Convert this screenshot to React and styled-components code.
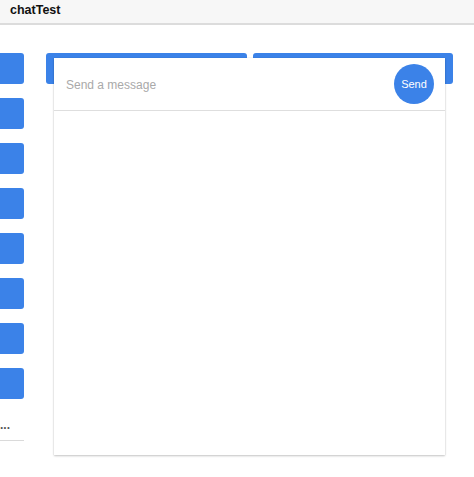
import React from "react";
import styled, { createGlobalStyle } from "styled-components";

const Global = createGlobalStyle`
  html, body { margin: 0; padding: 0; background: #fff; }
  html { overflow: hidden; }
  body { font-family: "Liberation Sans", Arial, sans-serif; min-height: 477px; }
  * { box-sizing: border-box; }
`;

const BLUE = "#3b82e8";

const Header = styled.header`
  height: 25px;
  background: #f7f7f7;
  border-bottom: 2px solid #dcdcdc;
  padding: 3px 0 0 10px;
  font-size: 12.5px;
  font-weight: bold;
  color: #111;
  line-height: 14px;
`;

const Layout = styled.div`
  display: flex;
  padding-top: 28px;
`;

const Sidebar = styled.nav`
  width: 24px;
  display: flex;
  flex-direction: column;
  gap: 14px;
`;

const SideButton = styled.button`
  display: block;
  width: 24px;
  height: 31px;
  border: none;
  padding: 0;
  background: ${BLUE};
  border-radius: 0 3px 3px 0;
`;

const More = styled.div`
  margin-top: 5px;
  font-size: 12px;
  font-weight: bold;
  color: #555;
  line-height: 14px;
  padding-bottom: 8px;
  border-bottom: 1px solid #dadada;
  white-space: nowrap;
  overflow: hidden;
`;

const MainCol = styled.main`
  margin-left: 22px;
  width: 407px;
  display: flex;
  flex-direction: column;
`;

const Tabs = styled.div`
  display: flex;
  gap: 6px;
`;

const Tab = styled.button`
  flex: 1;
  height: 31px;
  border: none;
  background: ${BLUE};
  border-radius: 3px;
`;

const Card = styled.section`
  position: relative;
  z-index: 1;
  margin: -26px 0 0 8px;
  width: 391px;
  height: 397px;
  background: #fff;
  box-shadow: 0 1px 2px rgba(0, 0, 0, 0.22), 0 0 1px rgba(0, 0, 0, 0.12);
  display: flex;
  flex-direction: column;
`;

const InputRow = styled.div`
  height: 53px;
  display: flex;
  align-items: center;
  padding: 0 11px 0 12px;
  border-bottom: 1px solid #dedede;
`;

const MessageInput = styled.input`
  flex: 1;
  border: none;
  outline: none;
  font-family: inherit;
  font-size: 12px;
  color: #333;
  background: transparent;
  padding: 0;
  margin-top: 1px;
  &::placeholder { color: #a9a9a9; }
`;

const SendButton = styled.button`
  width: 40px;
  height: 40px;
  border-radius: 50%;
  border: none;
  background: ${BLUE};
  color: #fff;
  font-family: inherit;
  font-size: 11px;
  padding: 0;
`;

const Messages = styled.div`
  flex: 1;
`;

export default function App() {
  return (
    <>
      <Global />
      <Header>chatTest</Header>
      <Layout>
        <Sidebar>
          {Array.from({ length: 8 }).map((_, i) => (
            <SideButton key={i} />
          ))}
          <More>...</More>
        </Sidebar>
        <MainCol>
          <Tabs>
            <Tab />
            <Tab />
          </Tabs>
          <Card>
            <InputRow>
              <MessageInput placeholder="Send a message" />
              <SendButton>Send</SendButton>
            </InputRow>
            <Messages />
          </Card>
        </MainCol>
      </Layout>
    </>
  );
}
